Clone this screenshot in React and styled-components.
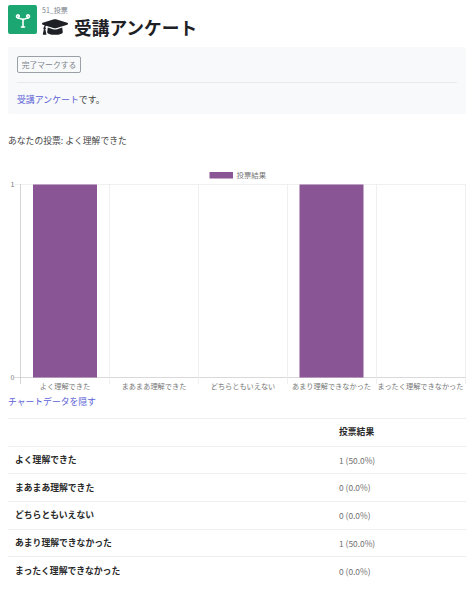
import React from "react";
import styled, { createGlobalStyle } from "styled-components";
import { FaGraduationCap } from "react-icons/fa";

const Global = createGlobalStyle`
  html, body { margin: 0; padding: 0; background: #fff; }
  body { font-family: "Noto Sans CJK JP", "Noto Sans", sans-serif; color: #333; overflow: hidden; }
`;
const Page = styled.div`
  width: 474px; height: 594px; box-sizing: border-box; padding: 5px 8px 0;
  display: flex; flex-direction: column;
`;
const Header = styled.header`display: flex; gap: 5px; height: 42px;`;
const Logo = styled.div`
  width: 29px; height: 29px; border-radius: 2px; background: #1ba672;
  display: flex; align-items: center; justify-content: center;
`;
const Heading = styled.div`display: flex; flex-direction: column;`;
const Crumb = styled.div`font-size: 7px; line-height: 9px; color: #7a8289; margin-top: 1px;`;
const Title = styled.h1`
  margin: -1px 0 0; font-size: 17.7px; line-height: 24px; font-weight: 700; color: #1d2125;
  display: flex; align-items: center; gap: 6px;
`;
const Card = styled.section`
  background: #f8f9fa; height: 67px; box-sizing: border-box; padding: 9px 9px 0;
  border-radius: 2px;
`;
const MarkButton = styled.button`
  display: block; width: 64px; height: 17px; padding: 0; box-sizing: border-box;
  border: 1px solid #9aa0a6; border-radius: 2px; background: transparent;
  color: #7a8289; font: 7.8px/15px "Noto Sans CJK JP", sans-serif;
`;
const Rule = styled.hr`margin: 9px 0 0; border: 0; border-top: 1px solid #e8eaec;`;
const Intro = styled.p`margin: 10px 0 0; font-size: 8.9px; line-height: 13px; color: #444;`;
const Link = styled.a`color: #5b5fd6; text-decoration: none;`;
const Vote = styled.p`margin: 20px 0 0; font-size: 8.8px; line-height: 13px; color: #444;`;
const ChartBox = styled.svg`display: block; margin: 18px 0 0 -8px; width: 474px; height: 228px; flex: none;`;
const Toggle = styled(Link)`font-size: 8.8px; line-height: 13px; display: block; margin-top: 2px;`;
const Table = styled.table`
  width: 458px; border-collapse: collapse; margin-top: 10px; font-size: 8.8px; table-layout: fixed;
`;
const Row = styled.tr`height: 27.7px; border-top: 1px solid #eceeef;`;
const Label = styled.th`text-align: left; padding: 0 0 1px 7px; width: 317px; font-weight: 700; color: #2a2a2a;`;
const Value = styled.td`padding: 0 0 1px 7px; color: #6f6f6f; font-size: 8.4px;`;
const ColHead = styled.th`text-align: left; padding: 0 0 1px 7px; font-weight: 700; color: #2a2a2a;`;

const labels = ["よく理解できた", "まあまあ理解できた", "どちらともいえない", "あまり理解できなかった", "まったく理解できなかった"];
const counts = [1, 0, 0, 1, 0];
const grid = [109.5, 198.5, 287.5, 376.5, 465.5];
const centers = [65, 154, 243, 331.5, 420.5];

function Chart() {
  return (
    <ChartBox viewBox="0 165 474 228" role="img">
      <rect x="209.5" y="172" width="23.5" height="6.5" fill="#8a5594" />
      <text x="236.5" y="178" fontSize="7.4" fill="#777">投票結果</text>
      <text x="14.5" y="187" fontSize="7" fill="#777" textAnchor="end">1</text>
      <text x="14.5" y="380" fontSize="7" fill="#777" textAnchor="end">0</text>
      <line x1="14" x2="466" y1="184.5" y2="184.5" stroke="#ececec" strokeWidth="0.8" />
      <line x1="14" x2="466" y1="377.5" y2="377.5" stroke="#cfcfcf" strokeWidth="0.8" />
      <line x1="20.5" x2="20.5" y1="184" y2="384" stroke="#c9c9c9" strokeWidth="0.8" />
      {grid.map((x) => (
        <line key={x} x1={x} x2={x} y1="184" y2="384" stroke="#ececec" strokeWidth="0.8" />
      ))}
      {counts.map((c, i) =>
        c ? <rect key={i} x={centers[i] - 32} y="184.5" width="64" height="193" fill="#8a5594" /> : null
      )}
      {labels.map((l, i) => (
        <text key={l} x={centers[i]} y="389" fontSize="7.2" fill="#777" textAnchor="middle">{l}</text>
      ))}
    </ChartBox>
  );
}

export default function App() {
  return (
    <Page>
      <Global />
      <Header>
        <Logo>
          <svg width="20" height="20" viewBox="0 0 20 20" fill="none" stroke="#fff" strokeWidth="1.6" strokeLinecap="round" strokeLinejoin="round">
            <path d="M10 17V9" />
            <path d="M8.4 17h3.2" />
            <path d="M10 9.5C8.5 9.5 7.5 8 6 8.2C4.6 8.4 3.4 7.4 3.5 6.1C3.6 4.9 5.2 4.4 6 5.3C6.6 6 6.2 7 5.4 7" />
            <path d="M10 9.5C11.5 9.5 12.5 8 14 8.2C15.4 8.4 16.6 7.4 16.5 6.1C16.4 4.9 14.8 4.4 14 5.3C13.4 6 13.8 7 14.6 7" />
          </svg>
        </Logo>
        <Heading>
          <Crumb>51_投票</Crumb>
          <Title><FaGraduationCap size={26} color="#1d2125" />受講アンケート</Title>
        </Heading>
      </Header>
      <Card>
        <MarkButton>完了マークする</MarkButton>
        <Rule />
        <Intro><Link href="#">受講アンケート</Link>です。</Intro>
      </Card>
      <Vote>あなたの投票: よく理解できた</Vote>
      <Chart />
      <Toggle href="#">チャートデータを隠す</Toggle>
      <Table>
        <tbody>
          <Row><Label /><ColHead>投票結果</ColHead></Row>
          {labels.map((l, i) => (
            <Row key={l}>
              <Label>{l}</Label>
              <Value>{counts[i]} ({counts[i] ? "50.0" : "0.0"}%)</Value>
            </Row>
          ))}
        </tbody>
      </Table>
    </Page>
  );
}
